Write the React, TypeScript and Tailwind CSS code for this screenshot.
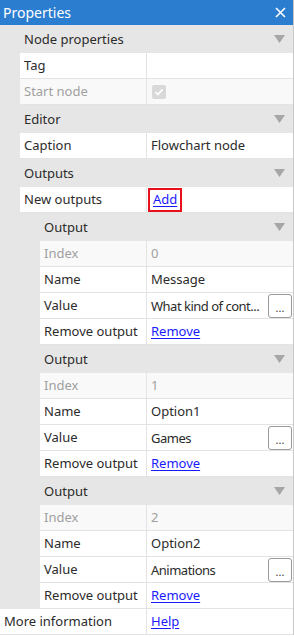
import { ReactNode } from 'react'

const font = { fontFamily: '"Noto Sans", "Open Sans", sans-serif' }

function Triangle() {
  return (
    <svg width="11" height="8" viewBox="0 0 11 8" className="mr-[8px]">
      <path d="M0 0 L11 0 L5.5 8 Z" fill="#a6a6a6" />
    </svg>
  )
}

function Header({ title, indent }: { title: string; indent: 20 | 40 }) {
  return (
    <div className={`flex h-[28px] items-center justify-between bg-[#e6e6e6] ${indent === 20 ? 'pl-[24px]' : 'pl-[44px]'}`}>
      <span className="text-[#2b2b2b]">{title}</span>
      <Triangle />
    </div>
  )
}

function Row({
  label,
  indent,
  children,
  disabled,
}: {
  label: string
  indent: 0 | 20 | 40
  children?: ReactNode
  disabled?: boolean
}) {
  const pad = indent === 0 ? 'pl-0' : indent === 20 ? 'pl-[20px]' : 'pl-[40px]'
  return (
    <div className={`flex h-[26px] bg-[#e6e6e6] ${pad}`}>
      <div className={`flex min-w-0 flex-1 border-b border-[#e3e3e3] ${disabled ? 'bg-[#f9f9f9]' : 'bg-white'}`}>
        <div
          className={`flex shrink-0 items-center border-r border-[#e3e3e3] pl-[4px] ${disabled ? 'text-[#a0a0a0]' : 'text-[#2b2b2b]'} ${
            indent === 0 ? 'w-[147px]' : indent === 20 ? 'w-[127px]' : 'w-[107px]'
          }`}
        >
          {label}
        </div>
        <div className={`flex min-w-0 flex-1 items-center pl-[4px] ${disabled ? 'text-[#a0a0a0]' : 'text-[#2b2b2b]'}`}>
          {children}
        </div>
      </div>
    </div>
  )
}

function Link({ text }: { text: string }) {
  return <span className="text-[#1a1aff] underline underline-offset-2">{text}</span>
}

function ValueWithButton({ text }: { text: string }) {
  return (
    <div className="flex min-w-0 flex-1 items-center gap-[2px]">
      <span className="min-w-0 flex-1 whitespace-nowrap leading-[18px] tracking-[-0.5px]">{text}</span>
      <div className="mr-[1px] flex h-[24px] w-[24px] shrink-0 items-end justify-center rounded-[3px] border border-[#9a9a9a] bg-white pb-[3px] text-[11px] leading-[12px] text-[#333]">
        ...
      </div>
    </div>
  )
}

function OutputGroup({ index, name, value }: { index: number; name: string; value: string }) {
  return (
    <>
      <Header title="Output" indent={40} />
      <Row label="Index" indent={40} disabled>
        {index}
      </Row>
      <Row label="Name" indent={40}>
        {name}
      </Row>
      <Row label="Value" indent={40}>
        <ValueWithButton text={value} />
      </Row>
      <Row label="Remove output" indent={40}>
        <Link text="Remove" />
      </Row>
    </>
  )
}

export default function App() {
  return (
    <div className="h-[637px] w-[294px] bg-white text-[13px] leading-none" style={font}>
      <div className="w-[294px] border-r border-[#c8c8c8]">
        <div className="flex h-[25px] items-center justify-between bg-[#2b7dd0] pl-[3px] pr-[7px] text-white">
          <span className="text-[14px]">Properties</span>
          <svg width="11" height="11" viewBox="0 0 11 11">
            <path d="M1 1 L10 10 M10 1 L1 10" stroke="white" strokeWidth="1.6" />
          </svg>
        </div>
        <Header title="Node properties" indent={20} />
        <Row label="Tag" indent={20} />
        <Row label="Start node" indent={20} disabled>
          <div className="ml-[1px] flex h-[14px] w-[14px] items-center justify-center rounded-[2px] bg-[#d9d9d9]">
            <svg width="10" height="10" viewBox="0 0 10 10">
              <path d="M1.5 5.2 L4 7.6 L8.6 2.4" stroke="white" strokeWidth="1.6" fill="none" />
            </svg>
          </div>
        </Row>
        <Header title="Editor" indent={20} />
        <Row label="Caption" indent={20}>
          Flowchart node
        </Row>
        <Header title="Outputs" indent={20} />
        <Row label="New outputs" indent={20}>
          <div className="-ml-[3px] flex h-[24px] items-center border-2 border-[#e8101c] px-[3px]">
            <Link text="Add" />
          </div>
        </Row>
        <OutputGroup index={0} name="Message" value="What kind of cont..." />
        <OutputGroup index={1} name="Option1" value="Games" />
        <OutputGroup index={2} name="Option2" value="Animations" />
        <Row label="More information" indent={0}>
          <Link text="Help" />
        </Row>
      </div>
    </div>
  )
}
